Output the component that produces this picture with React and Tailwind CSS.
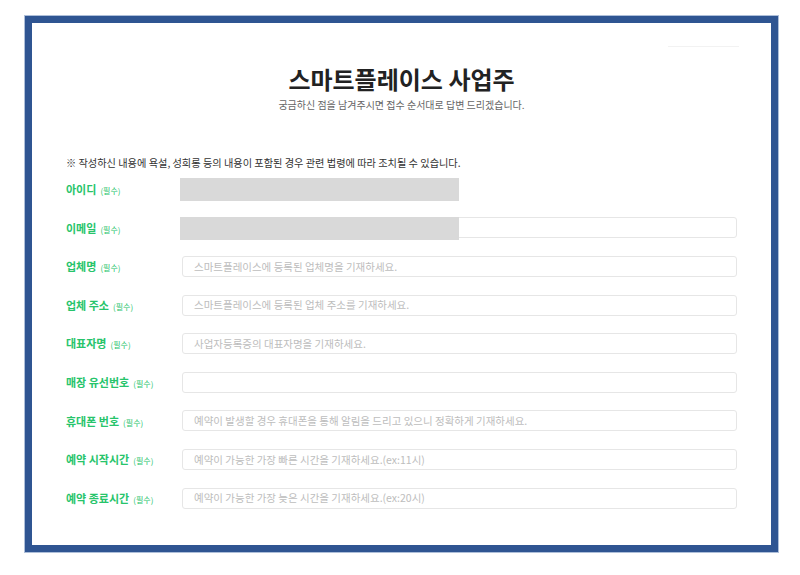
import React from 'react';

const fields = [
  { label: '아이디', type: 'masked' },
  { label: '이메일', type: 'maskedInput' },
  { label: '업체명', placeholder: '스마트플레이스에 등록된 업체명을 기재하세요.' },
  { label: '업체 주소', placeholder: '스마트플레이스에 등록된 업체 주소를 기재하세요.' },
  { label: '대표자명', placeholder: '사업자등록증의 대표자명을 기재하세요.' },
  { label: '매장 유선번호', placeholder: '' },
  { label: '휴대폰 번호', placeholder: '예약이 발생할 경우 휴대폰을 통해 알림을 드리고 있으니 정확하게 기재하세요.' },
  { label: '예약 시작시간', placeholder: '예약이 가능한 가장 빠른 시간을 기재하세요.(ex:11시)' },
  { label: '예약 종료시간', placeholder: '예약이 가능한 가장 늦은 시간을 기재하세요.(ex:20시)' },
];

const FieldRow = ({ field }) => {
  return (
    <div className="flex items-center h-[38.6px]">
      <div className="w-[116px] shrink-0 flex items-baseline gap-[4px] text-[#27c46b]">
        <span className="text-[11px] font-bold">{field.label}</span>
        <span className="text-[8px]">(필수)</span>
      </div>
      {field.type === 'masked' && (
        <div className="w-[279px] h-[23px] bg-[#d9d9d9] ml-[-2px]" />
      )}
      {field.type === 'maskedInput' && (
        <div className="relative w-[555px] h-[21px] border border-[#e6e6e6] rounded-[3px]">
          {/* grey cover over the value */}
          <div className="absolute left-[-3px] top-[-1px] w-[279px] h-[23px] bg-[#d9d9d9]" />
        </div>
      )}
      {field.type === undefined && (
        <div className="w-[555px] h-[21px] border border-[#e6e6e6] rounded-[3px] flex items-center pl-[11px]">
          <span className="text-[10.5px] text-[#bdbdbd] whitespace-nowrap">{field.placeholder}</span>
        </div>
      )}
    </div>
  );
};

const App = () => {
  return (
    <div
      className="w-[800px] h-[575px] bg-white pt-[16px] pl-[25px]"
      style={{ fontFamily: '"Noto Sans CJK KR", "Noto Sans", sans-serif' }}
    >
      <div className="w-[753px] h-[536px] border-[7px] border-[#2f5592] bg-white shadow-[0_0_0_1px_#aebfd9]">
        <div className="flex flex-col">
          {/* faint line top right */}
          <div className="h-[24px] flex items-end justify-end pr-[32px]">
            <div className="w-[71px] h-px bg-[#f2f2f2]" />
          </div>

          <h1 className="mt-[17px] text-center text-[24px] leading-[30px] font-bold text-[#222]">
            스마트플레이스 사업주
          </h1>
          <p className="mt-[4px] text-center text-[10px] leading-[14px] text-[#666]">
            궁금하신 점을 남겨주시면 접수 순서대로 답변 드리겠습니다.
          </p>

          <div className="pl-[34px] mt-[44px]">
            <p className="text-[10.2px] leading-[14px] text-[#333]">
              ※ 작성하신 내용에 욕설, 성희롱 등의 내용이 포함된 경우 관련 법령에 따라 조치될 수 있습니다.
            </p>
            <div className="flex flex-col">
              {fields.map((f) => (
                <FieldRow key={f.label} field={f} />
              ))}
            </div>
          </div>
        </div>
      </div>
    </div>
  );
};

export default App;
